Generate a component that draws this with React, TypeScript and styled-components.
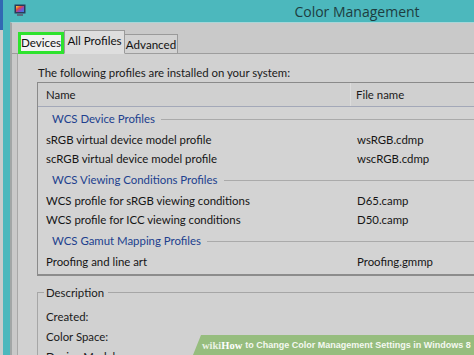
import React from "react"
import styled, { createGlobalStyle } from "styled-components"

const TEXT = "11.4px"

const GlobalStyle = createGlobalStyle`
  html, body {
    margin: 0;
    padding: 0;
    background: #cfcfcf;
  }
  body {
    width: 474px;
    height: 355px;
    overflow: hidden;
    font-family: Lato, "Open Sans", sans-serif;
  }
`

type Row =
  | { kind: "group"; label: string }
  | { kind: "item"; name: string; file: string }

const rows: Row[] = [
  { kind: "group", label: "WCS Device Profiles" },
  { kind: "item", name: "sRGB virtual device model profile", file: "wsRGB.cdmp" },
  { kind: "item", name: "scRGB virtual device model profile", file: "wscRGB.cdmp" },
  { kind: "group", label: "WCS Viewing Conditions Profiles" },
  { kind: "item", name: "WCS profile for sRGB viewing conditions", file: "D65.camp" },
  { kind: "item", name: "WCS profile for ICC viewing conditions", file: "D50.camp" },
  { kind: "group", label: "WCS Gamut Mapping Profiles" },
  { kind: "item", name: "Proofing and line art", file: "Proofing.gmmp" },
  { kind: "item", name: "Photography", file: "Photo.gmmp" },
]

const AppIcon = () => (
  <svg width="12" height="12" viewBox="0 0 12 12">
    <defs>
      <linearGradient id="spec" x1="0" y1="0" x2="1" y2="1">
        <stop offset="0" stopColor="#f4e23a" />
        <stop offset="0.35" stopColor="#e0463c" />
        <stop offset="0.65" stopColor="#7c4bd0" />
        <stop offset="1" stopColor="#2c8be0" />
      </linearGradient>
    </defs>
    <rect x="0.5" y="0.5" width="11" height="9" fill="#2a3a5a" />
    <rect x="2" y="2" width="8" height="6" fill="url(#spec)" />
    <rect x="3" y="10" width="6" height="2" fill="#5a6a80" />
  </svg>
)

const App = () => {
  return (
    <>
      <GlobalStyle />
      <Screen>
        <Desktop />
        <Window>
          <TitleBar>
            <IconSlot>
              <AppIcon />
            </IconSlot>
            <Title>Color Management</Title>
          </TitleBar>
          <WindowBody>
            <Frame />
            <Client>
              <TabStrip>
                <Tab $variant="marked" $w={46}>Devices</Tab>
                <Tab $variant="active" $w={61}>All Profiles</Tab>
                <Tab $variant="plain" $w={53}>Advanced</Tab>
              </TabStrip>
              <Panel>
                <Intro>The following profiles are installed on your system:</Intro>
                <ListBox>
                  <HeaderRow>
                    <NameHead>Name</NameHead>
                    <FileHead>File name</FileHead>
                  </HeaderRow>
                  {rows.map((r, i) =>
                    r.kind === "group" ? (
                      <GroupRow key={i}>
                        <GroupLabel>{r.label}</GroupLabel>
                        <GroupLine />
                      </GroupRow>
                    ) : (
                      <ItemRow key={i}>
                        <NameCell>{r.name}</NameCell>
                        <FileCell>{r.file}</FileCell>
                      </ItemRow>
                    )
                  )}
                </ListBox>
                <GroupBox>
                  <Legend>
                    <span>Description</span>
                    <LegendLine />
                  </Legend>
                  <Fields>
                    <Field>Created:</Field>
                    <Field>Color Space:</Field>
                    <Field>Device Model:</Field>
                  </Fields>
                </GroupBox>
              </Panel>
            </Client>
          </WindowBody>
        </Window>
        <Watermark>
          <WikiWord>wiki</WikiWord>
          <HowWord>How</HowWord>
          <WatermarkText>to Change Color Management Settings in Windows 8</WatermarkText>
        </Watermark>
      </Screen>
    </>
  )
}

const Screen = styled.div`
  position: relative;
  display: flex;
  width: 474px;
  height: 355px;
  overflow: hidden;
`

const Desktop = styled.div`
  width: 3px;
  flex-shrink: 0;
  background: linear-gradient(#3169b3 0, #3169b3 30px, #c9cccc 30px);
`

const Window = styled.div`
  flex: 1;
  min-width: 0;
  overflow: hidden;
  display: flex;
  flex-direction: column;
  background: #4cb8bd;
`

const TitleBar = styled.div`
  height: 22px;
  flex-shrink: 0;
  display: flex;
  align-items: center;
`

const IconSlot = styled.div`
  display: flex;
  margin: 0 0 2px 11px;
`

const Title = styled.div`
  flex: 1;
  text-align: center;
  padding-left: 214px;
  font-family: "Open Sans", sans-serif;
  font-size: 14px;
  color: #1d3d40;
  white-space: nowrap;
`

const WindowBody = styled.div`
  flex: 1;
  display: flex;
  min-width: 0;
`

const Frame = styled.div`
  width: 7px;
  flex-shrink: 0;
  background: #4cb8bd;
`

const Client = styled.div`
  flex: 1;
  min-width: 0;
  display: flex;
  flex-direction: column;
  background: #c9c9c9;
  border-left: 2px solid #a2a6a6;
  border-top: 1px solid #a9d6d8;
`

const TabStrip = styled.div`
  height: 30px;
  flex-shrink: 0;
  display: flex;
  align-items: flex-end;
  padding-left: 6px;
  border-bottom: 1px solid #9d9d9d;
`

const Tab = styled.div<{ $variant: "marked" | "active" | "plain"; $w: number }>`
  width: ${({ $w }) => $w}px;
  font-size: 11.6px;
  color: #111;
  display: flex;
  align-items: center;
  justify-content: center;
  box-sizing: border-box;
  margin-bottom: -1px;
  white-space: nowrap;
  ${({ $variant }) =>
    $variant === "marked"
      ? `
    height: 22px;
    padding-bottom: 2px;
    background: #f2f2f2;
    border: 3px solid #2ee32e;
  `
      : $variant === "active"
      ? `
    height: 24px;
    padding-bottom: 4px;
    background: #dedede;
    border: 1px solid #9a9a9a;
    border-bottom: 1px solid #dedede;
  `
      : `
    height: 20px;
    background: #d2d2d2;
    border: 1px solid #9a9a9a;
    border-left: none;
    border-bottom-color: #9d9d9d;
  `}
`

const Panel = styled.div`
  flex: 1;
  margin-left: 5px;
  border-left: 1px solid #a8a8a8;
  background: #d1d1d1;
  padding: 10px 0 0 19px;
  display: flex;
  flex-direction: column;
`

const Intro = styled.div`
  font-size: ${TEXT};
  color: #1a1a1a;
  line-height: 17px;
  margin-left: 1px;
  white-space: nowrap;
`

const ListBox = styled.div`
  margin-top: 1px;
  width: 460px;
  height: 191px;
  flex-shrink: 0;
  overflow: hidden;
  border: 1px solid #8a8a8a;
  border-right: none;
  border-bottom: 2px solid #8c8c8c;
  background: #d3d3d3;
`

const HeaderRow = styled.div`
  height: 23px;
  display: flex;
  align-items: center;
  border-bottom: 1px solid #a3a8b8;
  background: #d0d0d0;
  font-size: ${TEXT};
  color: #1a1a1a;
`

const NameHead = styled.div`
  width: 313px;
  box-sizing: border-box;
  padding-left: 8px;
  height: 100%;
  display: flex;
  align-items: center;
  border-right: 1px solid #dcdcdc;
`

const FileHead = styled.div`
  padding-left: 5px;
`

const GroupRow = styled.div`
  height: 23px;
  display: flex;
  align-items: center;
  padding-left: 14px;
`

const GroupLabel = styled.div`
  font-size: ${TEXT};
  color: #213f8e;
  white-space: nowrap;
`

const GroupLine = styled.div`
  flex: 1;
  height: 1px;
  margin: 1px 0 0 6px;
  background: #aaaaaa;
`

const ItemRow = styled.div`
  height: 19px;
  display: flex;
  align-items: center;
  font-size: ${TEXT};
  color: #151515;
`

const NameCell = styled.div`
  width: 319px;
  box-sizing: border-box;
  padding-left: 8px;
  white-space: nowrap;
  overflow: hidden;
`

const FileCell = styled.div`
  white-space: nowrap;
`

const GroupBox = styled.div`
  margin-top: 16px;
  width: 460px;
  flex-shrink: 0;
  border-left: 1px solid #a6a6a6;
  display: flex;
  flex-direction: column;
`

const Legend = styled.div`
  display: flex;
  align-items: center;
  height: 16px;
  margin-top: -8px;
  padding-left: 8px;
  font-size: ${TEXT};
  color: #1a1a1a;
  position: relative;
  &::before {
    content: "";
    position: absolute;
    left: 0;
    width: 6px;
    top: 8px;
    height: 1px;
    background: #a6a6a6;
  }
`

const LegendLine = styled.div`
  flex: 1;
  height: 1px;
  margin-left: 4px;
  background: #a6a6a6;
`

const Fields = styled.div`
  display: flex;
  flex-direction: column;
  padding-top: 6px;
`

const Field = styled.div`
  font-size: ${TEXT};
  color: #1a1a1a;
  height: 20px;
  display: flex;
  align-items: center;
  padding-left: 8px;
`

const Watermark = styled.div`
  position: absolute;
  right: 0;
  bottom: 0;
  width: 281px;
  height: 20px;
  background: #96bd7e;
  clip-path: polygon(8px 0, 100% 0, 100% 100%, 0 100%);
  display: flex;
  align-items: center;
  padding-left: 9px;
  box-sizing: border-box;
  white-space: nowrap;
  overflow: hidden;
`

const WikiWord = styled.span`
  font-family: "Liberation Serif", serif;
  font-weight: bold;
  color: #e9f1e2;
  font-size: 10.5px;
`

const HowWord = styled.span`
  font-family: "Liberation Serif", serif;
  font-weight: bold;
  color: #ffffff;
  font-size: 10.5px;
  margin-right: 3px;
`

const WatermarkText = styled.span`
  font-family: "Liberation Sans", Arial, sans-serif;
  font-weight: bold;
  color: #f4f8f0;
  font-size: 9px;
`

export default App
